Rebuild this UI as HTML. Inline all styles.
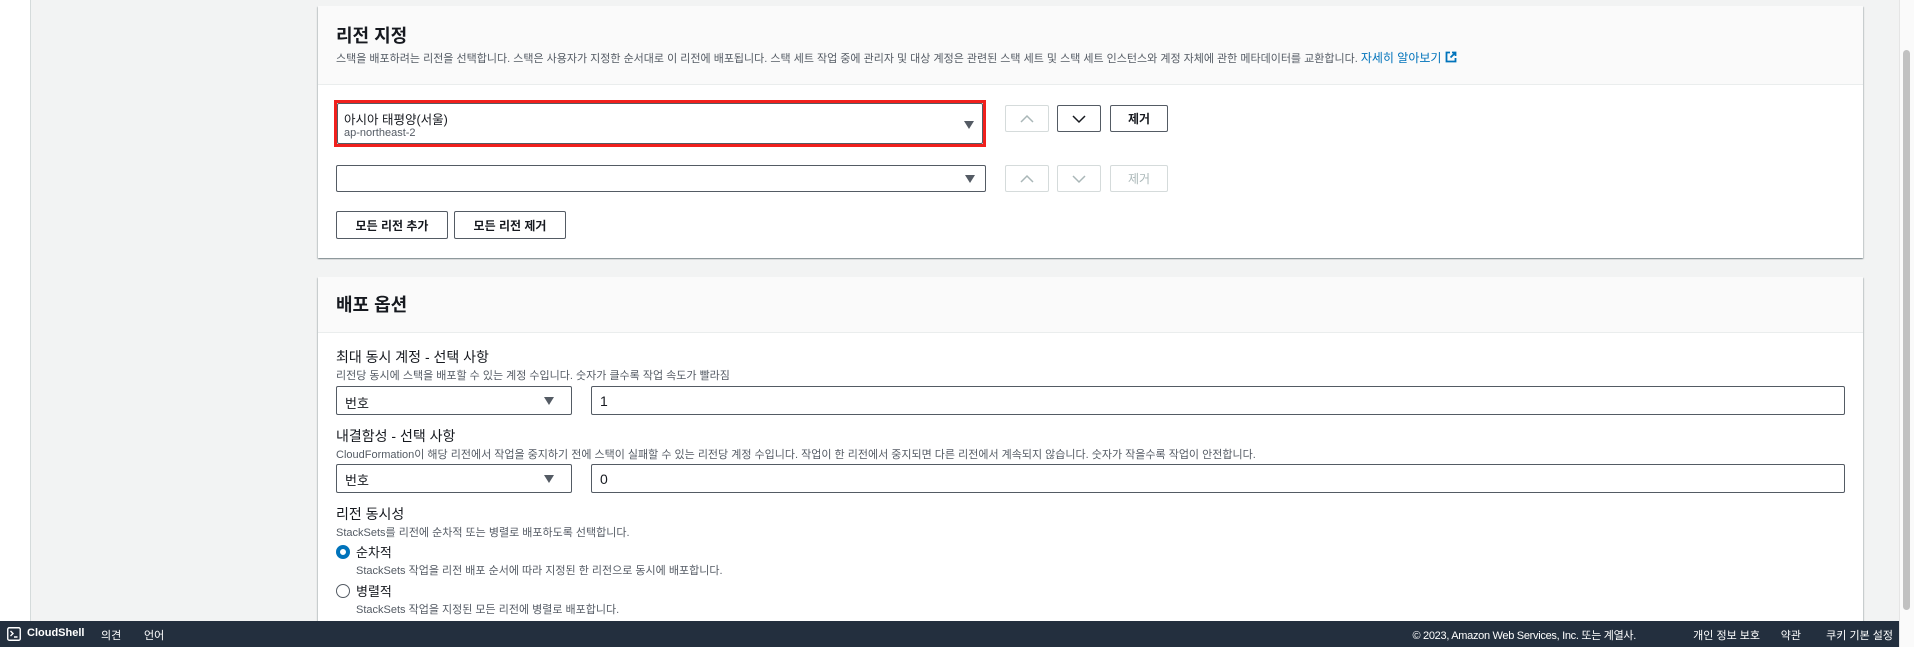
<!DOCTYPE html>
<html><head><meta charset="utf-8"><style>
*{box-sizing:border-box;margin:0;padding:0}
body{width:1914px;height:647px;overflow:hidden;background:#f2f3f3;font-family:"Liberation Sans","Noto Sans CJK KR",sans-serif;color:#16191f;position:relative}
.abs{position:absolute}
.leftw{left:0;top:0;width:31px;height:621px;background:#fff;border-right:1px solid #d5dbdb}
.panel{background:#fff;box-shadow:0 1px 1px rgba(0,28,36,.3),1px 1px 1px rgba(0,28,36,.15),-1px 1px 1px rgba(0,28,36,.15);left:318px;width:1545px}
.hdr{background:#fafafa;border-bottom:1px solid #eaeded;position:absolute;left:0;right:0;top:0}
h2{font-size:18px;font-weight:bold;position:absolute;left:18px}
.small{font-size:12px;color:#545b64}
.sel{border:1px solid #545b64;border-radius:2px;background:#fff}
.tri{position:absolute;width:0;height:0;border-left:5px solid transparent;border-right:5px solid transparent;border-top:8px solid #545b64}
.btn{border:1px solid #545b64;border-radius:2px;background:#fff;font-size:12px;font-weight:bold;display:flex;align-items:center;justify-content:center}
.dis{border-color:#d5dbdb;color:#aab7b8}
.lbl{font-size:14px;left:18px}
.foot{left:0;top:621px;width:1899px;height:26px;background:#232f3e;color:#fff;font-size:11px}
.fr{position:absolute;top:6px;white-space:nowrap;text-align:right}
</style></head><body>
<div class="abs leftw"></div>
<div class="abs" style="left:1899px;top:0;width:15px;height:647px;background:#fafafa;border-left:1px solid #e5e5e5"></div>
<div class="abs" style="left:1903px;top:50px;width:7px;height:560px;background:#c1c1c1;border-radius:4px"></div>

<div class="abs panel" style="top:6px;height:252px">
 <div class="hdr" style="height:79px">
  <h2 style="top:16px">리전 지정</h2>
  <div class="abs small" style="left:18px;top:43px;font-size:11px">스택을 배포하려는 리전을 선택합니다. 스택은 사용자가 지정한 순서대로 이 리전에 배포됩니다. 스택 세트 작업 중에 관리자 및 대상 계정은 관련된 스택 세트 및 스택 세트 인스턴스와 계정 자체에 관한 메타데이터를 교환합니다. <span style="color:#0073bb;font-size:12px">자세히 알아보기 <svg width="12" height="12" viewBox="0 0 12 12" style="vertical-align:-1px"><path d="M5 1.5H1.5v9h9V7M7 1.5h3.5V5M10.5 1.5L5.5 6.5" fill="none" stroke="#0073bb" stroke-width="1.8"/></svg></span></div>
 </div>
 <div class="abs" style="left:16px;top:94px;width:652px;height:47px;border:3px solid #f0201d"></div>
 <div class="abs sel" style="left:19px;top:97px;width:646px;height:41px">
  <div class="abs" style="left:6px;top:5px;font-size:12.5px">아시아 태평양(서울)</div>
  <div class="abs small" style="left:6px;top:23px;font-size:11px">ap-northeast-2</div>
  <div class="tri" style="left:626px;top:17px"></div>
 </div>
 <div class="abs btn dis" style="left:687px;top:99px;width:44px;height:27px"><svg width="14" height="10"><path d="M1 8l6-6 6 6" fill="none" stroke="#aab7b8" stroke-width="1.5"/></svg></div>
 <div class="abs btn" style="left:739px;top:99px;width:44px;height:27px"><svg width="14" height="10"><path d="M1 2l6 6 6-6" fill="none" stroke="#16191f" stroke-width="1.5"/></svg></div>
 <div class="abs btn" style="left:792px;top:99px;width:58px;height:27px">제거</div>
 <div class="abs sel" style="left:18px;top:159px;width:650px;height:27px"><div class="tri" style="left:628px;top:9px"></div></div>
 <div class="abs btn dis" style="left:687px;top:159px;width:44px;height:27px"><svg width="14" height="10"><path d="M1 8l6-6 6 6" fill="none" stroke="#aab7b8" stroke-width="1.5"/></svg></div>
 <div class="abs btn dis" style="left:739px;top:159px;width:44px;height:27px"><svg width="14" height="10"><path d="M1 2l6 6 6-6" fill="none" stroke="#aab7b8" stroke-width="1.5"/></svg></div>
 <div class="abs btn dis" style="left:792px;top:159px;width:58px;height:27px;font-weight:normal">제거</div>
 <div class="abs btn" style="left:18px;top:205px;width:112px;height:28px">모든 리전 추가</div>
 <div class="abs btn" style="left:136px;top:205px;width:112px;height:28px">모든 리전 제거</div>
</div>

<div class="abs panel" style="top:277px;height:360px">
 <div class="hdr" style="height:56px"><h2 style="top:14px">배포 옵션</h2></div>
 <div class="abs lbl" style="top:70px">최대 동시 계정 - 선택 사항</div>
 <div class="abs small" style="left:18px;top:90px;font-size:11px">리전당 동시에 스택을 배포할 수 있는 계정 수입니다. 숫자가 클수록 작업 속도가 빨라짐</div>
 <div class="abs sel" style="left:18px;top:109px;width:236px;height:29px"><div class="abs" style="left:8px;top:6px;font-size:13px">번호</div><div class="tri" style="left:207px;top:10px"></div></div>
 <div class="abs sel" style="left:273px;top:109px;width:1254px;height:29px"><div class="abs" style="left:8px;top:6px;font-size:14px">1</div></div>
 <div class="abs lbl" style="top:149px">내결함성 - 선택 사항</div>
 <div class="abs small" style="left:18px;top:169px;font-size:11px">CloudFormation이 해당 리전에서 작업을 중지하기 전에 스택이 실패할 수 있는 리전당 계정 수입니다. 작업이 한 리전에서 중지되면 다른 리전에서 계속되지 않습니다. 숫자가 작을수록 작업이 안전합니다.</div>
 <div class="abs sel" style="left:18px;top:187px;width:236px;height:29px"><div class="abs" style="left:8px;top:5px;font-size:13px">번호</div><div class="tri" style="left:207px;top:10px"></div></div>
 <div class="abs sel" style="left:273px;top:187px;width:1254px;height:29px"><div class="abs" style="left:8px;top:6px;font-size:14px">0</div></div>
 <div class="abs lbl" style="top:227px">리전 동시성</div>
 <div class="abs small" style="left:18px;top:247px;font-size:11px">StackSets를 리전에 순차적 또는 병렬로 배포하도록 선택합니다.</div>
 <div class="abs" style="left:18px;top:268px;width:14px;height:14px;border-radius:50%;border:4px solid #0073bb"></div>
 <div class="abs" style="left:38px;top:265px;font-size:13px">순차적</div>
 <div class="abs small" style="left:38px;top:285px;font-size:11px">StackSets 작업을 리전 배포 순서에 따라 지정된 한 리전으로 동시에 배포합니다.</div>
 <div class="abs" style="left:18px;top:307px;width:14px;height:14px;border-radius:50%;border:1px solid #545b64"></div>
 <div class="abs" style="left:38px;top:304px;font-size:13px">병렬적</div>
 <div class="abs small" style="left:38px;top:324px;font-size:11px">StackSets 작업을 지정된 모든 리전에 병렬로 배포합니다.</div>
</div>

<div class="abs foot">
 <svg class="abs" style="left:7px;top:6px" width="14" height="14" viewBox="0 0 14 14"><rect x="0.75" y="0.75" width="12.5" height="12.5" rx="1.5" fill="none" stroke="#fff" stroke-width="1.4"/><path d="M3.5 4l2.5 2.5-2.5 2.5M7 10h3.5" fill="none" stroke="#fff" stroke-width="1.4"/></svg>
 <div class="abs" style="left:27px;top:6px;font-weight:bold">CloudShell</div>
 <div class="abs" style="left:101px;top:6px">의견</div>
 <div class="abs" style="left:144px;top:6px">언어</div>
 <div class="fr" style="right:263px;letter-spacing:-0.3px">© 2023, Amazon Web Services, Inc. 또는 계열사.</div>
 <div class="fr" style="right:139px">개인 정보 보호</div>
 <div class="fr" style="right:98px">약관</div>
 <div class="fr" style="right:6px">쿠키 기본 설정</div>
</div>
</body></html>
